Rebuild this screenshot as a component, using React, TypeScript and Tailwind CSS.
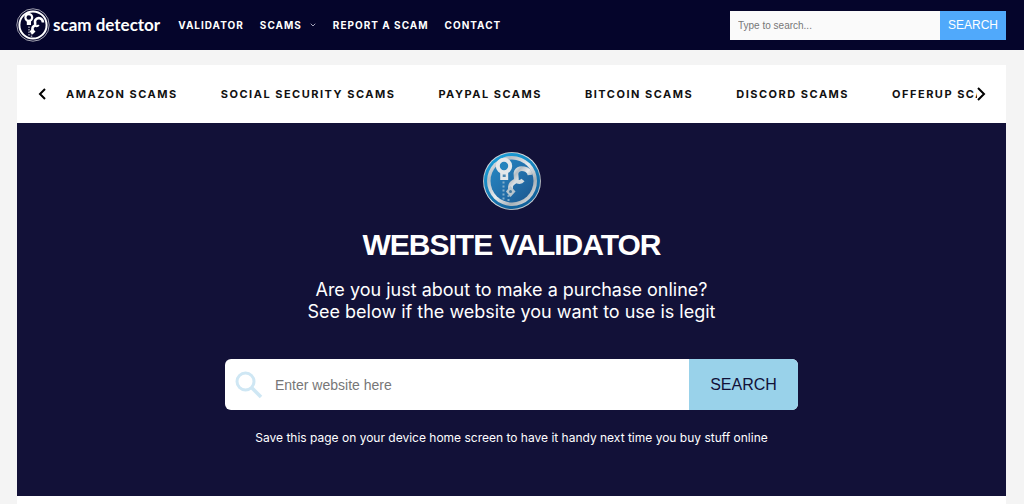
import React from "react";
import { ChevronDown } from "lucide-react";

const navItems = [
  { label: "VALIDATOR" },
  { label: "SCAMS", menu: true },
  { label: "REPORT A SCAM" },
  { label: "CONTACT" },
];

const topics = [
  "AMAZON SCAMS",
  "SOCIAL SECURITY SCAMS",
  "PAYPAL SCAMS",
  "BITCOIN SCAMS",
  "DISCORD SCAMS",
  "OFFERUP SCAMS",
];

function HandcuffMark() {
  return (
    <svg viewBox="0 0 34 34" className="size-[34px] shrink-0" fill="none" stroke="#fff" aria-hidden="true">
      <circle cx="17" cy="17" r="16.2" strokeWidth="0.8" opacity="0.8" />
      <circle cx="17" cy="17" r="13.6" strokeWidth="2" />
      <circle cx="12.800" cy="9.500" r="3.400" strokeWidth="2.200" />
      <path d="M10.800 12.500h4.200v4.500h-4.200z" fill="#fff" stroke="none" />
      <path d="M13 18.500v9M15.500 25v4" strokeWidth="1.500" strokeDasharray="1.500 1" opacity="0.6" />
      <path d="M27 14.500c-.3-4.500-5.500-5.800-7.600-2.500-1.200 2 .4 3.300-.4 5-.7 1.300-2.300 1.200-2.500 3.200v2" strokeWidth="2.600" />
      <path d="M19 17.500c1.300 1 2.800.8 3.800-.5" strokeWidth="2" />
      <path d="M16.500 20.500l3 3-3 3-3-3z" fill="#fff" stroke="none" />
    </svg>
  );
}

function HeroBadge() {
  return (
    <svg viewBox="0 0 60 60" className="size-[60px]" fill="none" aria-hidden="true">
      <defs>
        <linearGradient id="silver" x1="0" y1="0" x2="1" y2="1">
          <stop offset="0" stopColor="#fafafa" />
          <stop offset="0.25" stopColor="#b6bec5" />
          <stop offset="0.5" stopColor="#e9ecee" />
          <stop offset="0.72" stopColor="#a7b0b7" />
          <stop offset="1" stopColor="#f3f3f3" />
        </linearGradient>
        <linearGradient id="blue" x1="0" y1="0" x2="1" y2="1">
          <stop offset="0" stopColor="#2588c4" />
          <stop offset="0.5" stopColor="#2371ac" />
          <stop offset="1" stopColor="#1b568e" />
        </linearGradient>
        <linearGradient id="rim" x1="0" y1="0" x2="0.5" y2="1">
          <stop offset="0" stopColor="#1ba7e1" />
          <stop offset="1" stopColor="#12619b" />
        </linearGradient>
      </defs>
      <circle cx="30" cy="30" r="29" fill="url(#silver)" />
      <circle cx="30" cy="30" r="28" fill="url(#rim)" />
      <circle cx="30" cy="30" r="25" fill="url(#silver)" />
      <circle cx="30" cy="30" r="21.500" fill="url(#blue)" />
      <circle cx="22" cy="15" r="6.200" fill="#2484bd" stroke="#e4e8ea" strokeWidth="4" />
      <path d="M18.200 20.500h8v8.500h-8z" fill="#e4e8ea" />
      <path d="M20.700 23.500h3v2.500h-3z" fill="#4b87b1" />
      <path d="M21.500 30.500v18M26.500 44v8" stroke="#83aecb" strokeWidth="2" strokeDasharray="2 2" />
      <path d="M48 24c-.8-6.500-10.500-8.500-13.500-3.500-1.800 3.200.8 5.700-.5 8.500-1.200 2.600-5 2-5.500 6.500v4.500" stroke="url(#silver)" strokeWidth="4.800" />
      <path d="M34 29.500c2 2 5 2 7-.5" stroke="#d4dce0" strokeWidth="4" />
      <path d="M28.500 35l5 5.500-5 5.500-4.500-5.500z" fill="#b8c5cd" />
      <circle cx="28.500" cy="40.500" r="1.500" fill="#44789e" />
    </svg>
  );
}

export default function App() {
  return (
    <div className="flex min-h-screen flex-col bg-[#f4f4f4] font-['Liberation_Sans',sans-serif]">
      <header className="flex h-[50px] items-center bg-[#05052b] pr-[18px] pl-4">
        <a href="#home" className="flex items-center gap-[3px] text-white">
          <HandcuffMark />
          <span className="font-['Lato',sans-serif] text-[17px] leading-6 font-bold whitespace-nowrap">
            scam detector
          </span>
        </a>
        <nav className="ml-[18px] flex items-center gap-4 font-['Inter',sans-serif] text-[10px] leading-4 font-bold tracking-[1px] whitespace-nowrap text-white">
          {navItems.map((item) => (
            <a key={item.label} href="#nav" className="flex items-center gap-[7px]">
              {item.label}
              {item.menu && <ChevronDown className="size-2 text-[#a5a5bb]" strokeWidth={3} />}
            </a>
          ))}
        </nav>
        <form className="ml-auto flex h-[29px] w-[276px]" onSubmit={(e) => e.preventDefault()}>
          <input
            type="text"
            aria-label="Search the site"
            placeholder="Type to search..."
            className="min-w-0 flex-1 bg-[#fafafa] px-2 text-[10px] text-[#333] outline-none placeholder:text-[#777]"
          />
          <button type="submit" className="w-[66px] bg-[#50a9fb] text-xs text-white">
            SEARCH
          </button>
        </form>
      </header>

      <main className="mt-[15px] mr-[18px] ml-[17px] flex-1 bg-white">
        <div className="flex h-[58px] items-center">
          <button type="button" aria-label="Previous topics" className="flex w-[49px] shrink-0 justify-center">
            <svg viewBox="0 0 8 12" className="h-3 w-2" fill="none" stroke="#000" strokeWidth="2" aria-hidden="true">
              <path d="M7 1L2 6l5 5" />
            </svg>
          </button>
          <div className="flex min-w-0 flex-1 gap-[43px] overflow-hidden font-['Inter',sans-serif] text-[11px] leading-4 font-bold tracking-[1.5px] whitespace-nowrap text-[#111]">
            {topics.map((topic) => (
              <a key={topic} href="#topic">{topic}</a>
            ))}
          </div>
          <button type="button" aria-label="Next topics" className="mr-5 flex shrink-0">
            <svg viewBox="0 0 9 14" className="h-3.5 w-[9px]" fill="none" stroke="#000" strokeWidth="2" aria-hidden="true">
              <path d="M1 1l6 6-6 6" />
            </svg>
          </button>
        </div>

        <section className="flex h-[373px] flex-col items-center bg-[#121138] pt-7 text-center text-white">
          <HeroBadge />
          <h1 className="mt-4 text-[30px] leading-9 font-bold tracking-[-1px]">WEBSITE VALIDATOR</h1>
          <p className="mt-4 font-['Inter',sans-serif] text-lg leading-[22px]">
            Are you just about to make a purchase online?
            <br />
            See below if the website you want to use is legit
          </p>
          <form
            className="mt-9 flex h-[51px] w-full max-w-[573px] overflow-hidden rounded-md bg-white"
            onSubmit={(e) => e.preventDefault()}
          >
            <label htmlFor="website" aria-label="Website" className="flex w-[50px] shrink-0 items-center pl-2.5">
              <svg viewBox="0 0 28 28" className="size-7" fill="none" stroke="#cfe7f4" strokeWidth="3" aria-hidden="true">
                <circle cx="10.500" cy="10.500" r="8.500" />
                <path d="M16.500 16.500l9.500 9.500" strokeWidth="3.500" />
              </svg>
            </label>
            <input
              id="website"
              type="text"
              placeholder="Enter website here"
              className="min-w-0 flex-1 text-sm text-[#333] outline-none placeholder:text-[#777]"
            />
            <button type="submit" className="w-[109px] bg-[#99d2ea] text-base text-[#121138]">
              SEARCH
            </button>
          </form>
          <p className="mt-5 font-['Inter',sans-serif] text-xs leading-4">
            Save this page on your device home screen to have it handy next time you buy stuff online
          </p>
        </section>
      </main>
    </div>
  );
}
